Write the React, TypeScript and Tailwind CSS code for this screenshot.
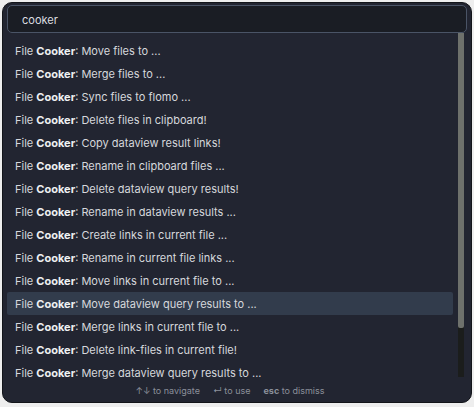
import React from "react";

const commands = [
  "Move files to ...",
  "Merge files to ...",
  "Sync files to flomo ...",
  "Delete files in clipboard!",
  "Copy dataview result links!",
  "Rename in clipboard files ...",
  "Delete dataview query results!",
  "Rename in dataview results ...",
  "Create links in current file ...",
  "Rename in current file links ...",
  "Move links in current file to ...",
  "Move dataview query results to ...",
  "Merge links in current file to ...",
  "Delete link-files in current file!",
  "Merge dataview query results to ...",
];

const selected = 11;

export default function App() {
  return (
    <div className="min-h-screen bg-[#eeeeee] p-[2px] font-['Inter',sans-serif]">
      <div className="w-[470px] h-[401px] rounded-[10px] border border-[#13151a] bg-[#222531] flex flex-col overflow-hidden">
        {/* search input */}
        <div className="px-[4px] pt-[2px]">
          <div className="h-[28px] rounded-[5px] border border-[#4a5466] bg-[#1a1d24] flex items-center pl-[14px] pt-[2px] text-[11px] text-[#dcdde0]">
            cooker
          </div>
        </div>

        {/* results */}
        <div className="flex flex-1 min-h-0 pt-[6px] pl-[4px]">
          <div className="flex-1 overflow-hidden">
            {commands.map((c, i) => (
              <div
                key={c}
                className={
                  "h-[23px] flex items-center pl-[8px] pt-[2px] text-[11px] text-[#d6d8dc] whitespace-nowrap " +
                  (i === selected ? "bg-[#323c4c] rounded-[2px]" : "")
                }
              >
                File&nbsp;<span className="font-bold text-[#eef0f2]">Cooker</span>: {c}
              </div>
            ))}
          </div>
          <div className="w-[6px] ml-[5px] mr-[7px] -mt-[6px] mb-[2px] bg-[#1b1d1c] flex flex-col">
            <div className="h-[295px] bg-[#6e716c] rounded-b-[2px]" />
          </div>
        </div>

        {/* footer */}
        <div className="h-[23px] flex items-center justify-center gap-[13px] pr-[14px] text-[9px] text-[#8b909a]">
          <span>↑↓ to navigate</span>
          <span>↵ to use</span>
          <span>
            <span className="font-bold">esc</span> to dismiss
          </span>
        </div>
      </div>
    </div>
  );
}
